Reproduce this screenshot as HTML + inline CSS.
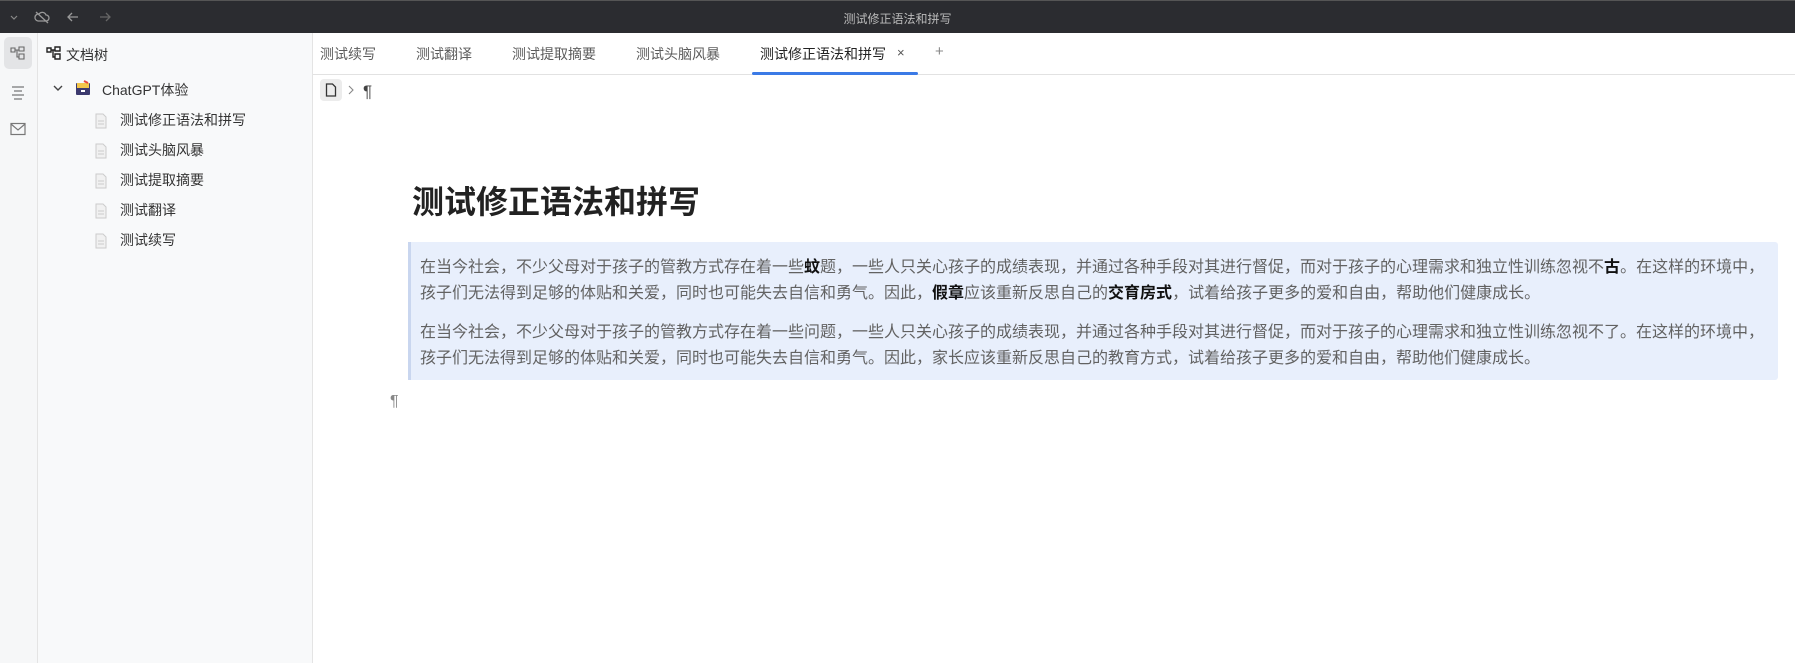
<!DOCTYPE html>
<html><head><meta charset="utf-8"><style>
*{margin:0;padding:0;box-sizing:border-box}
body{width:1795px;height:663px;overflow:hidden;background:#fff;font-family:"Liberation Sans","Noto Sans CJK SC",sans-serif;position:relative;color:#333}
.abs{position:absolute}
#top{left:0;top:0;width:1795px;height:33px;background:#2b2c30;border-top:1px solid #555}
#top .t{left:0;width:1795px;top:9px;text-align:center;font-size:12px;color:#bbb}
#rail{left:0;top:33px;width:38px;height:630px;background:#f6f7f8;border-right:1px solid #e4e4e4}
#side{left:38px;top:33px;width:275px;height:630px;background:#f8f9fa;border-right:1px solid #e4e4e4}
.st{font-size:14px;color:#333;white-space:nowrap}
#tabs{left:313px;top:33px;width:1482px;height:42px;border-bottom:1px solid #e2e2e2}
.tab{top:11px;font-size:14px;color:#5c5c5c;white-space:nowrap}
p{margin:0}
#bq{left:408px;top:242px;width:1370px;height:138px;background:#e8effc;border-left:3px solid #c9d6ef;border-radius:0 3px 3px 0;padding:13px 0 0 9px;font-size:16px;line-height:26px;color:#626262}
#bq p{margin-bottom:13px;white-space:nowrap}
#bq b{color:#111}
</style></head><body>
<div id="top" class="abs">
<svg class="abs" style="left:8px;top:11px" width="12" height="10"><path d="M3 4l3 3 3-3" stroke="#888" fill="none" stroke-width="1.2"/></svg>
<svg class="abs" style="left:33px;top:9px" width="18" height="14"><path d="M5 11h8a3 3 0 0 0 0-6 4 4 0 0 0-7-1 3 3 0 0 0-1 7z M3 2l12 11" stroke="#999" fill="none" stroke-width="1.3"/></svg>
<svg class="abs" style="left:66px;top:9px" width="14" height="14"><path d="M12 7H2M6 3L2 7l4 4" stroke="#999" fill="none" stroke-width="1.3"/></svg>
<svg class="abs" style="left:98px;top:9px" width="14" height="14"><path d="M2 7h10M8 3l4 4-4 4" stroke="#666" fill="none" stroke-width="1.3"/></svg>
<div class="abs t">测试修正语法和拼写</div>
</div>
<div id="rail" class="abs">
<div class="abs" style="left:4px;top:4px;width:28px;height:32px;background:#e3e4e6;border-radius:5px"></div>
<svg class="abs" style="left:10px;top:13px" width="16" height="14"><path d="M1 2h4v4H1zM9 1h5v4H9zM9 8h5v5H9zM5 4h2v7h2M7 4h2" stroke="#666" fill="none" stroke-width="1.1"/></svg>
<svg class="abs" style="left:10px;top:52px" width="16" height="16"><path d="M2 2h12M4 6h8M2 10h12M4 14h8" stroke="#777" fill="none" stroke-width="1.2"/></svg>
<svg class="abs" style="left:10px;top:89px" width="16" height="14"><rect x="1" y="1.5" width="14" height="11" fill="none" stroke="#777" stroke-width="1.2"/><path d="M1 2l7 6 7-6" stroke="#777" fill="none" stroke-width="1.2"/></svg>
</div>
<div id="side" class="abs">
<svg class="abs" style="left:8px;top:13px" width="16" height="14"><path d="M1 2h4v4H1zM9 1h5v4H9zM9 8h5v5H9zM5 4h2v7h2M7 4h2" stroke="#222" fill="none" stroke-width="1.4"/></svg>
<div class="abs st" style="left:28px;top:12px">文档树</div>
<svg class="abs" style="left:14px;top:50px" width="12" height="10"><path d="M2 3l4 4 4-4" stroke="#444" fill="none" stroke-width="1.4"/></svg>
<svg class="abs" style="left:37px;top:47px" width="16" height="16"><rect x="1" y="3" width="14" height="12" rx="1" fill="#3c3a6e"/><rect x="2" y="3" width="12" height="5" fill="#f3c64a"/><rect x="6" y="10" width="4" height="2" fill="#fff"/><path d="M9 1l4 2" stroke="#e8473d" stroke-width="2"/></svg>
<div class="abs st" style="left:64px;top:47px">ChatGPT体验</div>
<div class="abs" style="left:0;top:0">
<div class="abs st" style="left:82px;top:77px">测试修正语法和拼写</div>
<div class="abs st" style="left:82px;top:107px">测试头脑风暴</div>
<div class="abs st" style="left:82px;top:137px">测试提取摘要</div>
<div class="abs st" style="left:82px;top:167px">测试翻译</div>
<div class="abs st" style="left:82px;top:197px">测试续写</div>
</div>
<svg class="abs" style="left:56px;top:80px" width="14" height="160">
<g fill="#f1f1f1" stroke="#ccc" stroke-width="1">
<path d="M2 1h7l3 3v11H2z"/><path d="M2 31h7l3 3v11H2z"/><path d="M2 61h7l3 3v11H2z"/><path d="M2 91h7l3 3v11H2z"/><path d="M2 121h7l3 3v11H2z"/>
</g>
<g stroke="#ccc"><path d="M4 8h6M4 11h6M4 38h6M4 41h6M4 68h6M4 71h6M4 98h6M4 101h6M4 128h6M4 131h6"/></g>
</svg>
</div>
<div id="tabs" class="abs">
<div class="abs tab" style="left:7px">测试续写</div>
<div class="abs tab" style="left:103px">测试翻译</div>
<div class="abs tab" style="left:199px">测试提取摘要</div>
<div class="abs tab" style="left:323px">测试头脑风暴</div>
<div class="abs tab" style="left:447px;color:#222">测试修正语法和拼写</div>
<div class="abs tab" style="left:584px;font-size:13px;top:12px;color:#555">×</div>
<div class="abs tab" style="left:622px;font-size:15px;top:10px;color:#888">+</div>
<div class="abs" style="left:439px;top:39px;width:166px;height:3px;background:#3b7ae6;border-radius:2px"></div>
</div>
<div class="abs" style="left:320px;top:79px;width:22px;height:22px;background:#ececec;border-radius:4px"></div>
<svg class="abs" style="left:325px;top:83px" width="12" height="14"><path d="M1.5 1h6l3 3v9h-9z" fill="none" stroke="#333" stroke-width="1.3"/></svg>
<svg class="abs" style="left:347px;top:85px" width="8" height="10"><path d="M2 1l4 4-4 4" stroke="#888" fill="none" stroke-width="1.1"/></svg>
<div class="abs" style="left:363px;top:82px;font-size:17px;color:#444">¶</div>
<div class="abs" style="left:412px;top:177px;font-size:32px;font-weight:bold;color:#222;white-space:nowrap">测试修正语法和拼写</div>
<div id="bq" class="abs">
<p>在当今社会，不少父母对于孩子的管教方式存在着一些<b>蚊</b>题，一些人只关心孩子的成绩表现，并通过各种手段对其进行督促，而对于孩子的心理需求和独立性训练忽视不<b>古</b>。在这样的环境中，<br>孩子们无法得到足够的体贴和关爱，同时也可能失去自信和勇气。因此，<b>假章</b>应该重新反思自己的<b>交育房式</b>，试着给孩子更多的爱和自由，帮助他们健康成长。</p>
<p>在当今社会，不少父母对于孩子的管教方式存在着一些问题，一些人只关心孩子的成绩表现，并通过各种手段对其进行督促，而对于孩子的心理需求和独立性训练忽视不了。在这样的环境中，<br>孩子们无法得到足够的体贴和关爱，同时也可能失去自信和勇气。因此，家长应该重新反思自己的教育方式，试着给孩子更多的爱和自由，帮助他们健康成长。</p>
</div>
<div class="abs" style="left:390px;top:393px;font-size:16px;color:#888">¶</div>
</body></html>
